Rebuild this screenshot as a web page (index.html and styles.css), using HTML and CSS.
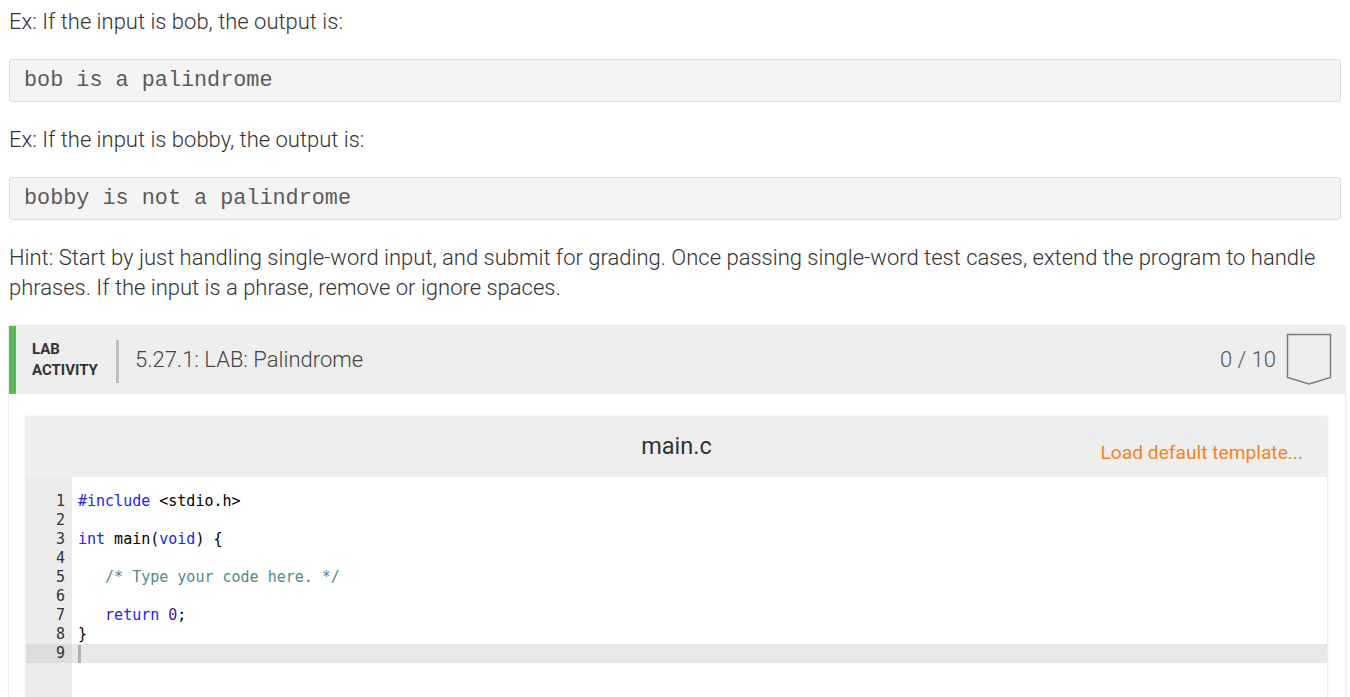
FILE: index.html
```html
<!DOCTYPE html>
<html>
<head>
<meta charset="utf-8">
<link rel="stylesheet" href="styles.css">
</head>
<body>
<div class="page">
  <p class="para">Ex: If the input is bob, the output is:</p>
  <div class="sample">bob is a palindrome</div>
  <p class="para">Ex: If the input is bobby, the output is:</p>
  <div class="sample">bobby is not a palindrome</div>
  <p class="para">Hint: Start by just handling single-word input, and submit for grading. Once passing single-word test cases, extend the program to handle phrases. If the input is a phrase, remove or ignore spaces.</p>

  <div class="lab">
    <div class="lab-head">
      <div class="lab-label">LAB<br>ACTIVITY</div>
      <div class="lab-sep"></div>
      <div class="lab-title">5.27.1: LAB: Palindrome</div>
      <div class="lab-score">0 / 10</div>
      <svg class="badge" width="46" height="54" viewBox="0 0 46 54">
        <path d="M1.5 1.5 H44.5 V44.5 L23 51 L1.5 44.5 Z" fill="none" stroke="#7a7a7a" stroke-width="1.4"/>
      </svg>
    </div>
    <div class="lab-body">
      <div class="editor">
        <div class="ed-head">
          <div class="ed-file">main.c</div>
          <div class="ed-load">Load default template...</div>
        </div>
        <div class="ed-code">
          <div class="line"><span class="ln">1</span><span class="src"><span class="kw">#include</span> &lt;stdio.h&gt;</span></div>
          <div class="line"><span class="ln">2</span><span class="src"></span></div>
          <div class="line"><span class="ln">3</span><span class="src"><span class="kw">int</span> main(<span class="kw">void</span>) {</span></div>
          <div class="line"><span class="ln">4</span><span class="src"></span></div>
          <div class="line"><span class="ln">5</span><span class="src">   <span class="cm">/* Type your code here. */</span></span></div>
          <div class="line"><span class="ln">6</span><span class="src"></span></div>
          <div class="line"><span class="ln">7</span><span class="src">   <span class="kw">return</span> <span class="num">0</span>;</span></div>
          <div class="line"><span class="ln">8</span><span class="src">}</span></div>
          <div class="line active"><span class="ln">9</span><span class="src"><span class="cursor"></span></span></div>
          <div class="line filler"><span class="ln"></span><span class="src"></span></div>
        </div>
      </div>
    </div>
  </div>
</div>
</body>
</html>
```

FILE: styles.css
```css
html, body {
  margin: 0;
  padding: 0;
  background: #fff;
  overflow: hidden;
}
.page {
  width: 1332px;
  padding: 7px 0 0 9px;
  font-family: Roboto, "Liberation Sans", sans-serif;
  font-weight: 300;
  color: #333;
}
.para {
  margin: 0;
  font-size: 22px;
  line-height: 30px;
}
.sample {
  margin: 22px 0 23px;
  height: 41px;
  border: 1px solid #dcdcdc;
  border-radius: 3px;
  background: #f4f4f4;
  display: flex;
  align-items: center;
  padding: 0 14px;
  font-family: "Liberation Mono", monospace;
  font-size: 21.8px;
  font-weight: 400;
  color: #5a5a5a;
  white-space: pre;
}
.lab {
  margin-top: 23px;
  margin-right: -4px;
  height: 420px;
  box-shadow: 0 0 2px rgba(0,0,0,0.22);
  background: #fff;
}
.lab-head {
  height: 68px;
  margin-top: 2px;
  background: #eeeeee;
  border-left: 7px solid #5cb85c;
  display: flex;
  align-items: center;
  padding: 0 13px 0 16px;
}
.lab-label {
  font-weight: 700;
  font-size: 15px;
  line-height: 21px;
  color: #333;
  width: 84px;
}
.lab-sep {
  width: 3px;
  height: 43px;
  background: #bdbdbd;
  margin-right: 16px;
  margin-top: 2px;
}
.lab-title {
  flex: 1;
  font-size: 22px;
  color: #444;
  margin-top: -1px;
}
.lab-score {
  font-size: 22px;
  color: #555;
  margin-right: 10px;
  margin-top: -1px;
}
.badge {
  display: block;
}
.lab-body {
  padding: 23px 18px 0 17px;
}
.editor {
  box-shadow: 0 0 3px rgba(0,0,0,0.18);
  background: #fff;
}
.ed-head {
  height: 60px;
  background: #eeeeee;
  position: relative;
  display: flex;
  align-items: center;
  justify-content: center;
}
.ed-file {
  font-size: 23.5px;
  font-weight: 400;
  color: #333;
  margin-top: -3px;
}
.ed-load {
  position: absolute;
  right: 24px;
  top: 24px;
  font-size: 19.2px;
  font-weight: 400;
  color: #f58220;
}
.ed-code {
  padding-top: 15px;
  background: linear-gradient(to right, #ebebeb 0, #ebebeb 46px, #fff 46px);
  font-family: "DejaVu Sans Mono", monospace;
  font-size: 15px;
  font-weight: 400;
  color: #000;
}
.line {
  display: flex;
  height: 19px;
  line-height: 19px;
}
.ln {
  width: 46px;
  box-sizing: border-box;
  padding-right: 7px;
  text-align: right;
  color: #333;
  flex: none;
}
.src {
  padding-left: 6px;
  white-space: pre;
  flex: 1;
  position: relative;
}
.active {
  background: #e8e8e8;
}
.active .ln {
  background: #dcdcdc;
}
.filler {
  height: 60px;
}
.kw { color: #2222ee; }
.cm { color: #4e8a8a; }
.num { color: #3a1aa8; }
.cursor {
  display: inline-block;
  width: 3px;
  height: 18px;
  background: #b0b0b0;
  vertical-align: top;
  margin-top: 1px;
}
```
